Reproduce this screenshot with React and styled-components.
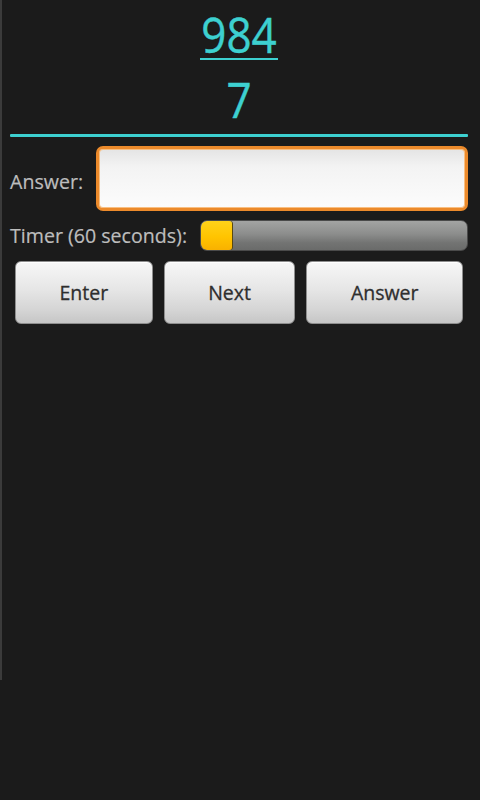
import styled, { createGlobalStyle } from "styled-components";

const GlobalStyle = createGlobalStyle`
  html, body {
    margin: 0;
    padding: 0;
    background: #1b1b1b;
  }
  body {
    font-family: "Open Sans", "DejaVu Sans", sans-serif;
  }
  * {
    box-sizing: border-box;
  }
`;

const Screen = styled.div`
  width: 480px;
  height: 800px;
  background: #1b1b1b;
  overflow: hidden;
`;

const Frame = styled.div`
  height: 680px;
  border-left: 2px solid #3b3b3b;
  padding: 0 12px 0 8px;
`;

const Problem = styled.div`
  display: flex;
  flex-direction: column;
  align-items: center;
  padding-top: 12px;
`;

const Numerator = styled.span`
  display: inline-block;
  padding: 0 1px 2px;
  border-bottom: 2px solid #3dd0d0;
`;

const Denominator = styled.span`
  display: inline-block;
  margin-top: 17px;
`;

const Digits = styled.span`
  display: inline-block;
  font-size: 44px;
  line-height: 44px;
  color: #3dd0d0;
  transform: scaleY(1.12);
  -webkit-text-stroke: 0.4px #3dd0d0;
`;

const Rule = styled.div`
  height: 3px;
  margin-top: 13px;
  background: #3dd0d0;
  border-radius: 1px;
`;

const Row = styled.div`
  display: flex;
  align-items: center;
  gap: 13px;
  margin-top: ${(p) => p.$top}px;
`;

const Label = styled.span`
  font-size: 19.6px;
  color: #bdbdbd;
  white-space: nowrap;
  padding-top: ${(p) => p.$shift || 0}px;
  -webkit-text-stroke: 0.2px #bdbdbd;
`;

const AnswerInput = styled.input`
  flex: 1;
  height: 65px;
  border: 3px solid #ec8a2b;
  border-radius: 7px;
  box-shadow: inset 0 0 0 1px #f8bf82;
  background: linear-gradient(#e4e4e4, #f3f3f3 30%, #fcfcfc);
  outline: none;
  font-family: inherit;
  font-size: 19px;
  padding: 0 10px;
`;

const TimerTrack = styled.div`
  flex: 1;
  height: 31px;
  border-radius: 7px;
  border: 1px solid #4a4a4a;
  background: linear-gradient(#a3a4a3, #8c8d8c 45%, #737473 75%, #6a6b6a);
  overflow: hidden;
`;

const TimerFill = styled.div`
  height: 100%;
  border-radius: 6px 3px 3px 6px;
  background: linear-gradient(#ffd21a, #ffc400 55%, #f9b100);
  box-shadow: 1px 0 0 #5a4a10;
`;

const Buttons = styled.div`
  display: flex;
  gap: 11px;
  margin-top: 10px;
  padding: 0 5px;
`;

const Button = styled.button`
  flex: 1 1 auto;
  height: 63px;
  padding: 0;
  border: 1px solid #8e8e8e;
  border-radius: 6px;
  background: linear-gradient(#f7f7f7, #e6e6e6 45%, #d4d4d4 80%, #c6c6c6);
  box-shadow: inset 0 1px 0 #ffffff;
  font-family: "Open Sans", "DejaVu Sans", sans-serif;
  font-size: 19.5px;
  color: #2e2e2e;
  -webkit-text-stroke: 0.3px #2e2e2e;
  cursor: pointer;
`;

export default function App() {
  const timeLeft = 5;
  const total = 60;
  return (
    <Screen>
      <GlobalStyle />
      <Frame>
        <Problem>
          <Numerator>
            <Digits>984</Digits>
          </Numerator>
          <Denominator>
            <Digits>7</Digits>
          </Denominator>
        </Problem>
        <Rule />
        <Row $top={9}>
          <Label $shift={6}>Answer:</Label>
          <AnswerInput type="text" />
        </Row>
        <Row $top={9}>
          <Label>Timer (60 seconds):</Label>
          <TimerTrack>
            <TimerFill style={{ width: `${Math.max(11.5, (timeLeft / total) * 100)}%` }} />
          </TimerTrack>
        </Row>
        <Buttons>
          <Button>Enter</Button>
          <Button>Next</Button>
          <Button>Answer</Button>
        </Buttons>
      </Frame>
    </Screen>
  );
}
